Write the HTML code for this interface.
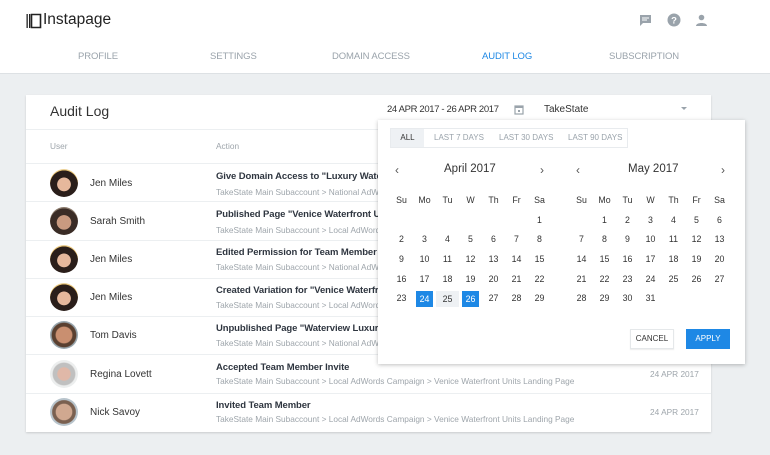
<!DOCTYPE html>
<html><head><meta charset="utf-8"><style>
*{box-sizing:border-box;margin:0;padding:0}
body{width:770px;height:455px;background:#eceff1;font-family:"Liberation Sans",sans-serif;position:relative;overflow:hidden;color:#333}
.a{position:absolute;white-space:nowrap}
.hdr{position:absolute;left:0;top:0;width:770px;height:74px;background:#fff;border-bottom:1px solid #dde1e4}
.nav{position:absolute;top:51px;font-size:9.5px;color:#9aa3ab;letter-spacing:-.1px}
.card{position:absolute;left:26px;top:95px;width:685px;height:337px;background:#fff;box-shadow:0 1px 2px rgba(0,0,0,.15)}
.row{position:absolute;left:26px;width:685px;border-top:1px solid #eceff1;height:38px}
.av{position:absolute;left:50px;width:28px;height:28px;border-radius:50%}
.nm{position:absolute;left:90px;font-size:10px;color:#333}
.t{position:absolute;left:216px;font-size:9.5px;font-weight:bold;color:#2f3640;letter-spacing:-.1px}
.s{position:absolute;left:216px;font-size:8.3px;color:#9ea5ab}
.d{position:absolute;left:650px;font-size:8.3px;color:#9ea5ab}
.pop{position:absolute;left:378px;top:120px;width:367px;height:244px;background:#fff;box-shadow:0 1px 4px rgba(0,0,0,.25)}
.g{position:absolute;display:grid;grid-template-columns:repeat(7,23px);grid-auto-rows:19.7px;font-size:8.8px;color:#333;text-align:center;line-height:19.7px}
.g span{display:block}
.sel{background:#1e88e5;color:#fff;margin:2px 3px;line-height:16px}
.rng{background:#eef1f4;margin:2px 0;line-height:16px}
</style></head><body>
<div class="hdr"></div>
<svg class="a" style="left:26px;top:13px" width="16" height="16" viewBox="0 0 16 16"><rect x="0.5" y="1" width="1.3" height="14" fill="#222"/><rect x="3" y="1" width="1.3" height="14" fill="#222"/><path d="M5.5 1.5 L14.5 1.5 L14.5 14.5 L5.5 14.5 Z" fill="none" stroke="#222" stroke-width="1.6"/></svg>
<div class="a" style="left:43px;top:11px;font-size:15.5px;color:#222">Instapage</div>
<svg class="a" style="left:639px;top:14px" width="13" height="13" viewBox="0 0 13 13"><path d="M1 1h11v8H4l-3 3z" fill="#9aa3ab"/><path d="M3 4h7M3 6h5" stroke="#fff" stroke-width="1"/></svg>
<svg class="a" style="left:667px;top:13px" width="14" height="14" viewBox="0 0 14 14"><circle cx="7" cy="7" r="6.5" fill="#9aa3ab"/><text x="7" y="10.5" font-size="9.5" font-weight="bold" fill="#fff" text-anchor="middle" font-family="Liberation Sans">?</text></svg>
<svg class="a" style="left:695px;top:14px" width="13" height="13" viewBox="0 0 13 13"><circle cx="6.5" cy="3.5" r="2.8" fill="#9aa3ab"/><path d="M1 12c0-4 11-4 11 0z" fill="#9aa3ab"/></svg>
<div class="nav" style="left:78px">PROFILE</div>
<div class="nav" style="left:210px">SETTINGS</div>
<div class="nav" style="left:332px">DOMAIN ACCESS</div>
<div class="nav" style="left:482px;color:#1e88e5">AUDIT LOG</div>
<div class="nav" style="left:609px">SUBSCRIPTION</div>

<div class="card"></div>
<div class="a" style="left:50px;top:103px;font-size:14px;color:#333">Audit Log</div>
<div class="a" style="left:387px;top:104px;font-size:9.5px;color:#333;letter-spacing:-.35px">24 APR 2017 - 26 APR 2017</div>
<svg class="a" style="left:514px;top:104px" width="10" height="11" viewBox="0 0 10 11"><rect x="1" y="2" width="8" height="8" fill="none" stroke="#9aa3ab" stroke-width="1.2"/><rect x="1" y="2" width="8" height="2" fill="#9aa3ab"/><rect x="4" y="6" width="2" height="2" fill="#9aa3ab"/></svg>
<div class="a" style="left:544px;top:104px;font-size:10px;color:#333">TakeState</div>
<div class="a" style="left:681px;top:107px;width:0;height:0;border-left:3px solid transparent;border-right:3px solid transparent;border-top:3.5px solid #9aa3ab"></div>
<div class="a" style="left:26px;top:129px;width:685px;height:1px;background:#eceff1"></div>
<div class="a" style="left:50px;top:141px;font-size:8.3px;color:#9ea5ab">User</div>
<div class="a" style="left:216px;top:141px;font-size:8.3px;color:#9ea5ab">Action</div>

<div class="row" style="top:163px"></div>
<div class="row" style="top:201px"></div>
<div class="row" style="top:240px"></div>
<div class="row" style="top:278px"></div>
<div class="row" style="top:316px"></div>
<div class="row" style="top:354px"></div>
<div class="row" style="top:393px"></div>

<div class="av" style="top:169px;background:radial-gradient(circle at 50% 55%,#e6b89c 0 32%,#2a1e1a 34% 66%,#e8c06a 68%,#f4f4f4 80%)"></div>
<div class="nm" style="top:178px">Jen Miles</div>
<div class="t" style="top:171px">Give Domain Access to "Luxury Waterfront</div>
<div class="s" style="top:187px">TakeState Main Subaccount &gt; National AdWords</div>

<div class="av" style="top:207px;background:radial-gradient(circle at 50% 55%,#c99a80 0 34%,#3a2c26 36% 66%,#8a7a6c 68%)"></div>
<div class="nm" style="top:216px">Sarah Smith</div>
<div class="t" style="top:209px">Published Page "Venice Waterfront Units</div>
<div class="s" style="top:225px">TakeState Main Subaccount &gt; Local AdWords</div>

<div class="av" style="top:245px;background:radial-gradient(circle at 50% 55%,#e6b89c 0 32%,#2a1e1a 34% 66%,#e8c06a 68%,#f4f4f4 80%)"></div>
<div class="nm" style="top:254px">Jen Miles</div>
<div class="t" style="top:247px">Edited Permission for Team Member</div>
<div class="s" style="top:262px">TakeState Main Subaccount &gt; National AdWords</div>

<div class="av" style="top:283px;background:radial-gradient(circle at 50% 55%,#e6b89c 0 32%,#2a1e1a 34% 66%,#e8c06a 68%,#f4f4f4 80%)"></div>
<div class="nm" style="top:292px">Jen Miles</div>
<div class="t" style="top:285px">Created Variation for "Venice Waterfront</div>
<div class="s" style="top:300px">TakeState Main Subaccount &gt; Local AdWords</div>

<div class="av" style="top:321px;background:radial-gradient(circle at 50% 50%,#c98f70 0 40%,#5a4030 45% 60%,#9aa8b0 65%)"></div>
<div class="nm" style="top:330px">Tom Davis</div>
<div class="t" style="top:323px">Unpublished Page "Waterview Luxury Su</div>
<div class="s" style="top:338px">TakeState Main Subaccount &gt; National AdWords</div>

<div class="av" style="top:360px;background:radial-gradient(circle at 50% 50%,#e0b8a8 0 32%,#c0c0c0 36% 55%,#eceeee 60%)"></div>
<div class="nm" style="top:369px">Regina Lovett</div>
<div class="t" style="top:362px">Accepted Team Member Invite</div>
<div class="s" style="top:376px">TakeState Main Subaccount &gt; Local AdWords Campaign &gt; Venice Waterfront Units Landing Page</div>
<div class="d" style="top:369px">24 APR 2017</div>

<div class="av" style="top:398px;background:radial-gradient(circle at 50% 50%,#d0a890 0 40%,#7a6050 44% 58%,#b8c4cc 62%)"></div>
<div class="nm" style="top:407px">Nick Savoy</div>
<div class="t" style="top:400px">Invited Team Member</div>
<div class="s" style="top:414px">TakeState Main Subaccount &gt; Local AdWords Campaign &gt; Venice Waterfront Units Landing Page</div>
<div class="d" style="top:407px">24 APR 2017</div>

<div class="pop"></div>
<div class="a" style="left:390px;top:128px;width:238px;height:20px;border:1px solid #e8ebee;font-size:8px;color:#9aa3ab;line-height:18px">
<span class="a" style="left:0;top:0;width:33px;height:18px;background:#eef1f4;color:#333;text-align:center">ALL</span>
<span class="a" style="left:43px">LAST 7 DAYS</span>
<span class="a" style="left:108px">LAST 30 DAYS</span>
<span class="a" style="left:177px">LAST 90 DAYS</span>
</div>
<div class="a" style="left:395px;top:163px;font-size:12px;color:#555">&lsaquo;</div>
<div class="a" style="left:540px;top:163px;font-size:12px;color:#555">&rsaquo;</div>
<div class="a" style="left:444px;top:163px;font-size:11.5px;color:#333">April 2017</div>
<div class="a" style="left:576px;top:163px;font-size:12px;color:#555">&lsaquo;</div>
<div class="a" style="left:721px;top:163px;font-size:12px;color:#555">&rsaquo;</div>
<div class="a" style="left:628px;top:163px;font-size:11.5px;color:#333">May 2017</div>

<div class="g" style="left:390px;top:191px">
<span>Su</span><span>Mo</span><span>Tu</span><span>W</span><span>Th</span><span>Fr</span><span>Sa</span>
<span></span><span></span><span></span><span></span><span></span><span></span><span>1</span>
<span>2</span><span>3</span><span>4</span><span>5</span><span>6</span><span>7</span><span>8</span>
<span>9</span><span>10</span><span>11</span><span>12</span><span>13</span><span>14</span><span>15</span>
<span>16</span><span>17</span><span>18</span><span>19</span><span>20</span><span>21</span><span>22</span>
<span>23</span><span class="sel">24</span><span class="rng">25</span><span class="sel">26</span><span>27</span><span>28</span><span>29</span>
</div>
<div class="g" style="left:570px;top:191px">
<span>Su</span><span>Mo</span><span>Tu</span><span>W</span><span>Th</span><span>Fr</span><span>Sa</span>
<span></span><span>1</span><span>2</span><span>3</span><span>4</span><span>5</span><span>6</span>
<span>7</span><span>8</span><span>9</span><span>10</span><span>11</span><span>12</span><span>13</span>
<span>14</span><span>15</span><span>16</span><span>17</span><span>18</span><span>19</span><span>20</span>
<span>21</span><span>22</span><span>23</span><span>24</span><span>25</span><span>26</span><span>27</span>
<span>28</span><span>29</span><span>30</span><span>31</span>
</div>
<div class="a" style="left:630px;top:329px;width:44px;height:20px;border:1px solid #e5e8ea;box-shadow:0 1px 1px rgba(0,0,0,.08);font-size:8px;color:#333;text-align:center;line-height:18px">CANCEL</div>
<div class="a" style="left:686px;top:329px;width:44px;height:20px;background:#1e88e5;font-size:8px;color:#fff;text-align:center;line-height:20px">APPLY</div>
</body></html>
